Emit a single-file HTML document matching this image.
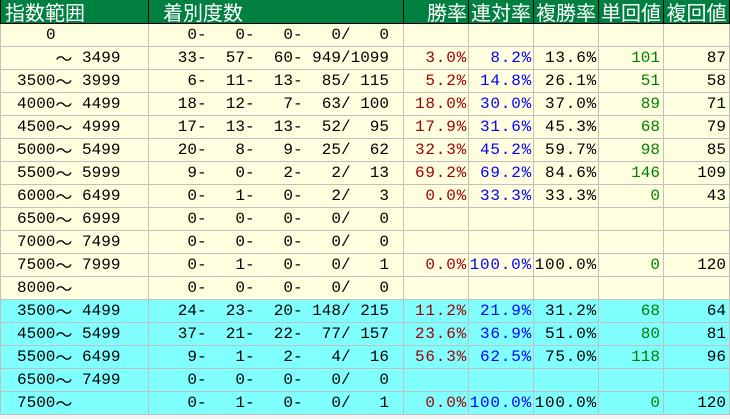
<!DOCTYPE html><html><head><meta charset="utf-8"><style>
body{margin:0;background:#f4f4f4;width:730px;height:419px;overflow:hidden}
table{border-collapse:collapse;table-layout:fixed;position:absolute;left:0;top:0;width:729px}
td{border:1px solid #c0c0c0;height:22px;padding:0 3px;font:16px/22px "Liberation Mono",monospace;white-space:pre;text-align:right;background:#ffffe0;color:#000;overflow:hidden}
tr.h td{background:#008040;color:#fff;height:23px;border:1px solid #000;border-top:none;font:20px/23px "Noto Sans CJK JP",sans-serif;text-align:center;letter-spacing:0px;padding:0 1px}
tr.h td span{display:inline-block;height:23px;line-height:23px;vertical-align:top}
tr.c td{background:#80ffff}
td.a{text-align:left;padding-left:16px}
td.b{padding-right:14px}
.w{font-family:"Noto Sans CJK JP",sans-serif;font-size:17px;display:inline-block;height:22px;line-height:22px;vertical-align:top}
.p{letter-spacing:0.8px;padding-right:1px;padding-left:0}
.r{color:#a00000}.bl{color:#0000ff}.g{color:#008000}
</style></head><body>
<table>
<col style="width:148px"><col style="width:255px"><col style="width:65px"><col style="width:65px"><col style="width:65px"><col style="width:65px"><col style="width:66px">
<tr class="h"><td style="text-align:left;padding-left:4px"><span>指数範囲</span></td><td style="text-align:left;padding-left:14px"><span>着別度数</span></td><td style="text-align:right"><span>勝率</span></td><td><span>連対率</span></td><td><span>複勝率</span></td><td><span>単回値</span></td><td><span>複回値</span></td></tr>
<tr><td class="a" style="padding-left:45px">0</td><td class="b">  0-   0-   0-   0/   0</td><td></td><td></td><td></td><td></td><td></td></tr>
<tr><td class="a">    <span class="w">～</span> 3499</td><td class="b"> 33-  57-  60- 949/1099</td><td class="p r">3.0%</td><td class="p bl">8.2%</td><td class="p">13.6%</td><td class="g">101</td><td>87</td></tr>
<tr><td class="a">3500<span class="w">～</span> 3999</td><td class="b">  6-  11-  13-  85/ 115</td><td class="p r">5.2%</td><td class="p bl">14.8%</td><td class="p">26.1%</td><td class="g">51</td><td>58</td></tr>
<tr><td class="a">4000<span class="w">～</span> 4499</td><td class="b"> 18-  12-   7-  63/ 100</td><td class="p r">18.0%</td><td class="p bl">30.0%</td><td class="p">37.0%</td><td class="g">89</td><td>71</td></tr>
<tr><td class="a">4500<span class="w">～</span> 4999</td><td class="b"> 17-  13-  13-  52/  95</td><td class="p r">17.9%</td><td class="p bl">31.6%</td><td class="p">45.3%</td><td class="g">68</td><td>79</td></tr>
<tr><td class="a">5000<span class="w">～</span> 5499</td><td class="b"> 20-   8-   9-  25/  62</td><td class="p r">32.3%</td><td class="p bl">45.2%</td><td class="p">59.7%</td><td class="g">98</td><td>85</td></tr>
<tr><td class="a">5500<span class="w">～</span> 5999</td><td class="b">  9-   0-   2-   2/  13</td><td class="p r">69.2%</td><td class="p bl">69.2%</td><td class="p">84.6%</td><td class="g">146</td><td>109</td></tr>
<tr><td class="a">6000<span class="w">～</span> 6499</td><td class="b">  0-   1-   0-   2/   3</td><td class="p r">0.0%</td><td class="p bl">33.3%</td><td class="p">33.3%</td><td class="g">0</td><td>43</td></tr>
<tr><td class="a">6500<span class="w">～</span> 6999</td><td class="b">  0-   0-   0-   0/   0</td><td></td><td></td><td></td><td></td><td></td></tr>
<tr><td class="a">7000<span class="w">～</span> 7499</td><td class="b">  0-   0-   0-   0/   0</td><td></td><td></td><td></td><td></td><td></td></tr>
<tr><td class="a">7500<span class="w">～</span> 7999</td><td class="b">  0-   1-   0-   0/   1</td><td class="p r">0.0%</td><td class="p bl">100.0%</td><td class="p">100.0%</td><td class="g">0</td><td>120</td></tr>
<tr><td class="a">8000<span class="w">～</span></td><td class="b">  0-   0-   0-   0/   0</td><td></td><td></td><td></td><td></td><td></td></tr>
<tr class="c"><td class="a">3500<span class="w">～</span> 4499</td><td class="b"> 24-  23-  20- 148/ 215</td><td class="p r">11.2%</td><td class="p bl">21.9%</td><td class="p">31.2%</td><td class="g">68</td><td>64</td></tr>
<tr class="c"><td class="a">4500<span class="w">～</span> 5499</td><td class="b"> 37-  21-  22-  77/ 157</td><td class="p r">23.6%</td><td class="p bl">36.9%</td><td class="p">51.0%</td><td class="g">80</td><td>81</td></tr>
<tr class="c"><td class="a">5500<span class="w">～</span> 6499</td><td class="b">  9-   1-   2-   4/  16</td><td class="p r">56.3%</td><td class="p bl">62.5%</td><td class="p">75.0%</td><td class="g">118</td><td>96</td></tr>
<tr class="c"><td class="a">6500<span class="w">～</span> 7499</td><td class="b">  0-   0-   0-   0/   0</td><td></td><td></td><td></td><td></td><td></td></tr>
<tr class="c"><td class="a">7500<span class="w">～</span></td><td class="b">  0-   1-   0-   0/   1</td><td class="p r">0.0%</td><td class="p bl">100.0%</td><td class="p">100.0%</td><td class="g">0</td><td>120</td></tr>
</table>
</body></html>
